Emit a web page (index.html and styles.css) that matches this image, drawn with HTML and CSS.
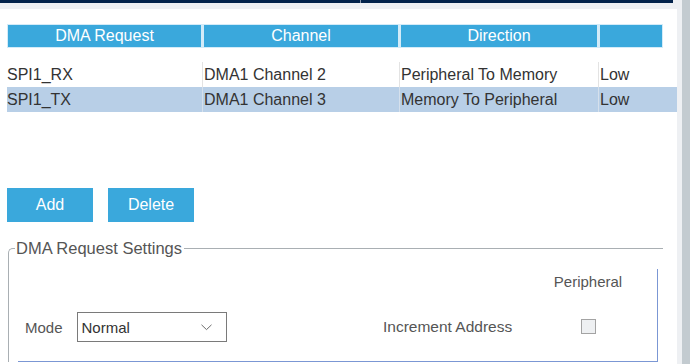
FILE: index.html
```html
<!DOCTYPE html>
<html>
<head>
<meta charset="utf-8">
<link rel="stylesheet" href="styles.css">
</head>
<body>
<div class="window">
  <div class="content">
    <div class="tabs"><div class="tab first"></div><div class="tab"></div></div>
    <div class="panel">
      <div class="grid head">
        <div class="hcell">DMA Request</div>
        <div class="hcell">Channel</div>
        <div class="hcell">Direction</div>
        <div class="hcell"></div>
      </div>
      <div class="rows">
        <div class="grid row">
          <div class="cell">SPI1_RX</div>
          <div class="cell">DMA1 Channel 2</div>
          <div class="cell">Peripheral To Memory</div>
          <div class="cell">Low</div>
        </div>
        <div class="grid row selected">
          <div class="cell">SPI1_TX</div>
          <div class="cell">DMA1 Channel 3</div>
          <div class="cell">Memory To Peripheral</div>
          <div class="cell">Low</div>
        </div>
      </div>
      <div class="buttons">
        <button class="btn">Add</button>
        <button class="btn">Delete</button>
      </div>
      <fieldset class="settings">
        <legend class="legend">DMA Request Settings</legend>
        <div class="inner">
          <div></div>
          <div></div>
          <div class="colhead">Peripheral</div>
          <div></div>
          <div class="mode">
            <span class="label">Mode</span>
            <div class="select">
              <span>Normal</span>
              <svg class="chev" width="11" height="7" viewBox="0 0 11 7"><path d="M0.5 0.8 L5.5 5.6 L10.5 0.8" fill="none" stroke="#6b6b6b" stroke-width="1"/></svg>
            </div>
          </div>
          <div class="label wide">Increment Address</div>
          <div class="checkcell"><span class="check"></span></div>
          <div></div>
        </div>
      </fieldset>
    </div>
  </div>
  <div class="scrollbar"></div>
</div>
</body>
</html>
```

FILE: styles.css
```css
html, body {
  margin: 0;
  padding: 0;
  background: #eef0f3;
}

.window {
  display: flex;
  width: 690px;
  height: 364px;
  overflow: hidden;
  font-family: "Liberation Sans", Arial, sans-serif;
  font-size: 16px;
  color: #333333;
}

.content {
  width: 682px;
  background: #eef0f3;
  display: flex;
  flex-direction: column;
}

.tabs {
  display: flex;
  width: 673px;
  height: 3px;
  background: #03234b;
}

.tab {
  flex: 1;
  background: #03234b;
}

.tab.first {
  flex: none;
  width: 360px;
  border-right: 1px solid #8a97ab;
}

.panel {
  margin-top: 6px;
  margin-right: 5px;
  background: #ffffff;
  padding: 15px 0 0 7px;
  flex: 1;
}

.grid {
  display: grid;
  grid-template-columns: 195px 197px 199px 65px;
}

.head {
  height: 24px;
}

.hcell {
  background: #3aa8dc;
  border: 1px solid #d3ebf8;
  color: #ffffff;
  text-align: center;
  line-height: 22px;
}

.hcell + .hcell {
  border-left-width: 2px;
}

.rows {
  margin-top: 14px;
}

.row {
  height: 25px;
  line-height: 25px;
}

.cell {
  white-space: nowrap;
  overflow: hidden;
}

.cell + .cell {
  border-left: 1px solid #e3e3e3;
  padding-left: 1px;
}

.selected {
  background: #b8cfe7;
}

.selected .cell + .cell {
  border-left-color: #d5e0ec;
}

.buttons {
  margin-top: 76px;
  display: flex;
  gap: 15px;
}

.btn {
  width: 86px;
  height: 34px;
  border: none;
  background: #3aa8dc;
  color: #ffffff;
  font-family: "Liberation Sans", Arial, sans-serif;
  font-size: 16px;
  padding: 0;
}

.settings {
  margin: 17px 0 0 1px;
  padding: 0;
  width: 654px;
  border: 1px solid #a9afb3;
  border-right: none;
  border-bottom: none;
  border-top-left-radius: 5px;
  min-width: 0;
}

.legend {
  margin-left: 6px;
  padding: 0 2px 0 1px;
  line-height: 18px;
  font-size: 16.5px;
  color: #555555;
}

.inner {
  margin: 12px 0 0 9px;
  width: 639px;
  height: 92px;
  border-right: 1px solid #7b97d4;
  border-bottom: 1px solid #7b97d4;
  display: grid;
  grid-template-columns: 365px 165px 80px 1fr;
  grid-template-rows: 24px 68px;
  align-items: center;
  font-size: 15px;
  color: #555555;
}

.wide {
  font-size: 15.5px;
}

.colhead {
  text-align: center;
}

.mode {
  display: flex;
  align-items: center;
  padding-left: 7px;
  gap: 14px;
}

.select {
  height: 28px;
  border: 1px solid #7a7a7a;
  display: flex;
  align-items: center;
  padding-left: 4px;
  box-sizing: content-box;
  width: 144px;
  color: #333333;
}

.chev {
  margin-left: auto;
  margin-right: 14px;
}

.checkcell {
  display: flex;
  justify-content: center;
}

.check {
  width: 13px;
  height: 13px;
  border: 1px solid #a3a3a3;
  background: #eef0f2;
  margin-top: -1px;
}

.scrollbar {
  width: 8px;
  background: #c3cbd0;
}
```
